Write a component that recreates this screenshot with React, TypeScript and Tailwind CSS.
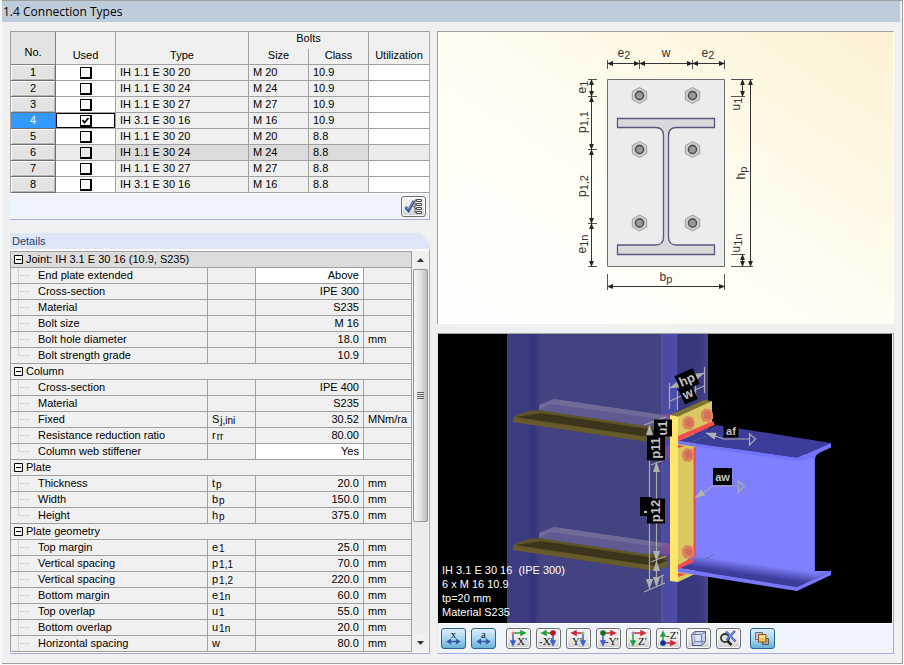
import { useState, type ReactNode } from "react";
import clsx from "clsx";

type Connection = { type: string; size: string; grade: string };

type Param = {
  label: string;
  symbol?: string;
  sub?: string;
  value: string;
  unit?: string;
  editable?: boolean;
};

type Group = { title: string; active?: boolean; params: Param[] };

const CONNECTIONS: Connection[] = [
  { type: "IH 1.1 E 30 20", size: "M 20", grade: "10.9" },
  { type: "IH 1.1 E 30 24", size: "M 24", grade: "10.9" },
  { type: "IH 1.1 E 30 27", size: "M 27", grade: "10.9" },
  { type: "IH 3.1 E 30 16", size: "M 16", grade: "10.9" },
  { type: "IH 1.1 E 30 20", size: "M 20", grade: "8.8" },
  { type: "IH 1.1 E 30 24", size: "M 24", grade: "8.8" },
  { type: "IH 1.1 E 30 27", size: "M 27", grade: "8.8" },
  { type: "IH 3.1 E 30 16", size: "M 16", grade: "8.8" },
];

const GROUPS: Group[] = [
  {
    title: "Joint: IH 3.1 E 30 16 (10.9, S235)",
    active: true,
    params: [
      { label: "End plate extended", value: "Above", editable: true },
      { label: "Cross-section", value: "IPE 300" },
      { label: "Material", value: "S235" },
      { label: "Bolt size", value: "M 16" },
      { label: "Bolt hole diameter", value: "18.0", unit: "mm" },
      { label: "Bolt strength grade", value: "10.9" },
    ],
  },
  {
    title: "Column",
    params: [
      { label: "Cross-section", value: "IPE 400" },
      { label: "Material", value: "S235" },
      { label: "Fixed", symbol: "S", sub: "j,ini", value: "30.52", unit: "MNm/ra" },
      { label: "Resistance reduction ratio", symbol: "r", sub: "rr", value: "80.00" },
      { label: "Column web stiffener", value: "Yes", editable: true },
    ],
  },
  {
    title: "Plate",
    params: [
      { label: "Thickness", symbol: "t", sub: "p", value: "20.0", unit: "mm" },
      { label: "Width", symbol: "b", sub: "p", value: "150.0", unit: "mm" },
      { label: "Height", symbol: "h", sub: "p", value: "375.0", unit: "mm" },
    ],
  },
  {
    title: "Plate geometry",
    params: [
      { label: "Top margin", symbol: "e", sub: "1", value: "25.0", unit: "mm" },
      { label: "Vertical spacing", symbol: "p", sub: "1,1", value: "70.0", unit: "mm" },
      { label: "Vertical spacing", symbol: "p", sub: "1,2", value: "220.0", unit: "mm" },
      { label: "Bottom margin", symbol: "e", sub: "1n", value: "60.0", unit: "mm" },
      { label: "Top overlap", symbol: "u", sub: "1", value: "55.0", unit: "mm" },
      { label: "Bottom overlap", symbol: "u", sub: "1n", value: "20.0", unit: "mm" },
      { label: "Horizontal spacing", symbol: "w", value: "80.0", unit: "mm" },
    ],
  },
];

function ToolButton({
  label,
  active,
  children,
}: {
  label: string;
  active?: boolean;
  children: ReactNode;
}) {
  return (
    <button
      type="button"
      aria-label={label}
      className={clsx(
        "h-[21px] w-[25px] shrink-0 rounded-[3px] border",
        active
          ? "border-[#2c628b] bg-linear-to-b from-[#dbeefa] via-[#a9d7f0] to-[#69b0d9]"
          : "border-[#707070] bg-linear-to-b from-[#f4f4f4] via-[#ebebeb] to-[#cfcfcf] shadow-[inset_0_0_0_1px_#fbfbfb]",
      )}
    >
      <svg viewBox="0 0 23 19" className="block h-full w-full overflow-visible">
        {children}
      </svg>
    </button>
  );
}

function ConnectionTable() {
  const [used, setUsed] = useState<number[]>([3]);
  const [selected, setSelected] = useState(3);

  const toggle = (i: number) => {
    setSelected(i);
    setUsed((prev) => (prev.includes(i) ? prev.filter((n) => n !== i) : [...prev, i]));
  };

  return (
    <section className="border-r border-b border-[#a9a9e8] bg-[#eff3fa]">
      <table className="w-full table-fixed border-separate border-spacing-0 border-t border-l border-[#a0a0a0] bg-[#f0f0f0] text-left">
        <colgroup>
          <col className="w-[45px]" />
          <col className="w-[60px]" />
          <col />
          <col className="w-[60px]" />
          <col className="w-[60px]" />
          <col className="w-[60px]" />
        </colgroup>
        <thead className="text-center leading-[13px]">
          <tr>
            <th rowSpan={2} className="border-r border-b border-[#808080] bg-[#e3e3e3] p-0 pt-2 font-normal">
              No.
            </th>
            <th rowSpan={2} className="border-r border-b border-[#a0a0a0] p-0 pb-[2px] align-bottom font-normal">
              Used
            </th>
            <th rowSpan={2} className="border-r border-b border-[#a0a0a0] p-0 pb-[2px] align-bottom font-normal">
              Type
            </th>
            <th colSpan={2} className="h-[17px] border-r border-[#a0a0a0] p-0 align-top font-normal">
              Bolts
            </th>
            <th rowSpan={2} className="border-b border-[#a0a0a0] p-0 pb-[2px] align-bottom font-normal">
              Utilization
            </th>
          </tr>
          <tr>
            <th className="h-4 border-r border-b border-[#a0a0a0] p-0 pb-[2px] font-normal">Size</th>
            <th className="h-4 border-r border-b border-[#a0a0a0] p-0 pb-[2px] font-normal">Class</th>
          </tr>
        </thead>
        <tbody>
          {CONNECTIONS.map((c, i) => {
            const current = i === selected;
            const hot = i === 5;
            const cell = clsx("h-4 border-r border-b border-[#a0a0a0] p-0 pl-1", hot && "bg-[#dbdbdb]");
            return (
              <tr key={i}>
                <th
                  scope="row"
                  className={clsx(
                    "h-4 border-r border-b border-[#707070] p-0 text-center font-normal",
                    current
                      ? "bg-[#3399ff] text-white"
                      : "bg-[#e3e3e3] shadow-[inset_1px_1px_0_#fff,inset_-1px_-1px_0_#b4b4b4]",
                  )}
                >
                  {i + 1}
                </th>
                <td
                  className={clsx(
                    "h-4 border-r border-b border-[#a0a0a0] p-0",
                    hot ? "bg-[#ebebeb]" : "bg-white",
                    current && "shadow-[inset_0_0_0_1px_#000]",
                  )}
                >
                  <label className="relative mx-auto block h-3 w-3">
                    <input
                      type="checkbox"
                      aria-label={`Used, connection ${i + 1}`}
                      checked={used.includes(i)}
                      onChange={() => toggle(i)}
                      className="peer block h-3 w-3 appearance-none border-t border-r-2 border-b-2 border-l border-black"
                    />
                    <svg
                      viewBox="0 0 12 12"
                      className="pointer-events-none absolute inset-0 hidden h-3 w-3 peer-checked:block"
                    >
                      <path d="M2.500 5 4.500 7.600 8.500 3" fill="none" stroke="#000" strokeWidth="1.700" />
                    </svg>
                  </label>
                </td>
                <td className={cell}>{c.type}</td>
                <td className={cell}>{c.size}</td>
                <td className={cell}>{c.grade}</td>
                <td className={clsx("h-4 border-b border-[#a0a0a0] p-0", hot ? "bg-[#ebebeb]" : "bg-white")} />
              </tr>
            );
          })}
        </tbody>
      </table>
      <div className="flex justify-end border-t border-white px-[3px] pt-[2px] pb-[2px]">
        <ToolButton label="Select connections">
          <path d="M3.500 10 6.500 13.500 12 4" fill="none" stroke="#2d4d94" strokeWidth="2.800" />
          <path d="M4 10.200 6.500 12.500 11.500 4.500" fill="none" stroke="#8fabe2" />
          <path d="M10.500 9.500h2.500M13 3v12.500M13 3h2M13 7.500h2M13 11.500h2M13 15.500h2" fill="none" stroke="#555" />
          <path
            d="M14.500 2.500h5v2h-5zM14.500 6.500h5v2h-5zM14.500 10.500h5v2h-5zM14.500 14.500h5v2h-5z"
            fill="#e8e8e8"
            stroke="#4d4d4d"
          />
        </ToolButton>
      </div>
    </section>
  );
}

function TreeLines({ last }: { last: boolean }) {
  return (
    <svg viewBox="0 0 27 15" className="block h-[15px] w-[27px] shrink-0">
      <path d={last ? "M7.500 0V7.500H19" : "M7.500 0V15M7.500 7.500H19"} fill="none" stroke="#d4d4d4" />
    </svg>
  );
}

function DetailsTable() {
  const [closed, setClosed] = useState<string[]>([]);

  const toggle = (title: string) =>
    setClosed((prev) => (prev.includes(title) ? prev.filter((t) => t !== title) : [...prev, title]));

  const cell = "h-4 border-r border-b border-[#a0a0a0] p-0";

  return (
    <table className="w-full table-fixed border-separate border-spacing-0 border-t border-l border-[#a0a0a0] bg-[#f0f0f0]">
      <colgroup>
        <col />
        <col className="w-12" />
        <col className="w-[108px]" />
        <col className="w-12" />
      </colgroup>
      {GROUPS.map((g) => {
        const open = !closed.includes(g.title);
        return (
          <tbody key={g.title}>
            <tr className={clsx(g.active && "bg-[#dcdcdc]")}>
              <th colSpan={4} className={clsx(cell, "text-left font-normal")}>
                <button type="button" onClick={() => toggle(g.title)} className="flex h-[15px] items-center gap-[3px] pl-[3px]">
                  <svg viewBox="0 0 9 9" className="h-[9px] w-[9px]">
                    <path d="M.5.5h8v8h-8z" fill="#fff" stroke="#000" />
                    <path d={open ? "M2 4.500h5" : "M2 4.500h5M4.500 2v5"} stroke="#000" />
                  </svg>
                  {g.title}
                </button>
              </th>
            </tr>
            {open &&
              g.params.map((p, i) => (
                <tr key={i}>
                  <td className={cell}>
                    <div className="flex">
                      <TreeLines last={i === g.params.length - 1 && p.symbol !== "w"} />
                      {p.label}
                    </div>
                  </td>
                  <td className={clsx(cell, "pl-1")}>
                    {p.symbol}
                    {p.sub && <sub className="-bottom-px ml-px text-[10px]">{p.sub}</sub>}
                  </td>
                  <td className={clsx(cell, "pr-1 text-right", p.editable && "bg-white")}>{p.value}</td>
                  <td className={clsx(cell, "pl-1 whitespace-nowrap")}>{p.unit}</td>
                </tr>
              ))}
          </tbody>
        );
      })}
    </table>
  );
}

function ScrollBar() {
  return (
    <div className="flex w-[17px] shrink-0 flex-col bg-[#f0f0f0] px-px">
      <button type="button" aria-label="Scroll up" className="flex h-[18px] items-center justify-center">
        <svg viewBox="0 0 7 4" className="h-1 w-[7px]">
          <path d="M0 4 3.500 0 7 4z" fill="#333" />
        </svg>
      </button>
      <div className="flex grow flex-col bg-[#ececec]">
        <div className="flex grow-9 basis-0 items-center justify-center rounded-[2px] border border-[#979797] bg-linear-to-r from-[#f5f5f5] via-[#e4e4e6] to-[#bcbcc0]">
          <svg viewBox="0 0 7 8" className="h-2 w-[7px]">
            <path d="M0 .5h7M0 2.500h7M0 4.500h7M0 6.500h7" stroke="#666" />
          </svg>
        </div>
        <div className="grow-4 basis-0" />
      </div>
      <button type="button" aria-label="Scroll down" className="flex h-[18px] items-center justify-center">
        <svg viewBox="0 0 7 4" className="h-1 w-[7px]">
          <path d="M0 0 3.500 4 7 0z" fill="#333" />
        </svg>
      </button>
    </div>
  );
}

function DimLabel({ x, y, main, sub, turned }: { x: number; y: number; main: string; sub?: string; turned?: boolean }) {
  return (
    <text x={x} y={y} textAnchor="middle" fontSize="12" fill="#333" transform={turned ? `rotate(-90 ${x} ${y})` : undefined}>
      {main}
      {sub && (
        <tspan dy="2" fontSize="11">
          {sub}
        </tspan>
      )}
    </text>
  );
}

function PlateDrawing() {
  const dim = { stroke: "#333", strokeWidth: 1, markerStart: "url(#dim)", markerEnd: "url(#dim)" };
  const bolts = [95.5, 149.5, 223].flatMap((y) => [639.5, 692.5].map((x) => [x, y]));

  return (
    <svg viewBox="570 45 192 266" className="h-[266px] w-48" fontFamily="Liberation Sans, sans-serif">
      <defs>
        <marker id="dim" viewBox="0 0 6 6" refX="5.500" refY="3" markerWidth="6" markerHeight="6" orient="auto-start-reverse">
          <path d="M0 .6 6 3 0 5.400z" fill="#222" />
        </marker>
      </defs>
      <path d="M607.500 79.500h117v187h-117z" fill="#ebeded" stroke="#707070" />
      <path
        d="M617.500 118.500h97v9h-38q-8 0-8 8v101.500q0 8 8 8h38v9.500h-97v-9.500h38q8 0 8-8v-101.500q0-8-8-8h-38z"
        fill="#d9d9db"
        stroke="#5c557f"
        strokeWidth="1.300"
      />
      {bolts.map(([x, y]) => (
        <g key={`${x}-${y}`} transform={`translate(${x} ${y})`}>
          <path d="M0-8 7.200-4V4L0 8-7.200 4V-4z" fill="#d0d0d0" stroke="#8d8d8d" strokeWidth=".8" />
          <circle r="5.400" fill="#bcbcbc" />
          <circle r="4" fill="#999" stroke="#454545" strokeWidth="1.300" />
        </g>
      ))}
      <path
        d="M607.500 60v9M639.500 60v9M692.500 60v9M724.500 60v9M588 79.500h9M588 96.500h9M588 149.500h9M588 223.500h9M588 266.500h9M731 79.500h22M731 96.500h14M731 254.500h14M731 266.500h22M607.500 274v16M724.500 274v16"
        stroke="#555"
      />
      <path d="M607.500 63.500H639.500" {...dim} />
      <path d="M639.500 63.500H692.500" {...dim} />
      <path d="M692.500 63.500H724.500" {...dim} />
      <path d="M591.500 79.500V96.500" {...dim} />
      <path d="M591.500 96.500V149.500" {...dim} />
      <path d="M591.500 149.500V223.500" {...dim} />
      <path d="M591.500 223.500V266.500" {...dim} />
      <path d="M742.500 79.500V96.500" {...dim} />
      <path d="M742.500 254.500V266.500" {...dim} />
      <path d="M750.500 79.500V266.500" {...dim} />
      <path d="M607.500 286.500H724.500" {...dim} />
      <DimLabel x={624} y={57} main="e" sub="2" />
      <DimLabel x={666} y={57} main="w" />
      <DimLabel x={708} y={57} main="e" sub="2" />
      <DimLabel x={586} y={87} main="e" sub="1" turned />
      <DimLabel x={586} y={122} main="p" sub="1,1" turned />
      <DimLabel x={586} y={186} main="p" sub="1,2" turned />
      <DimLabel x={586} y={244} main="e" sub="1n" turned />
      <DimLabel x={740} y={104} main="u" sub="1" turned />
      <DimLabel x={745} y={173} main="h" sub="p" turned />
      <DimLabel x={740} y={243} main="u" sub="1n" turned />
      <DimLabel x={666} y={281} main="b" sub="p" />
    </svg>
  );
}

function Stiffener() {
  return (
    <>
      <path d="M513 417 528 411 543 410 668 428V439L655 442.500 513 422z" fill="#5f5428" />
      <path d="M516 417 541 413 668 432 655 438z" fill="#3d351b" />
      <path d="M513 418 655 438 668 433V438L655 443 513 422z" fill="#665b2a" />
      <path d="M539 405 554 399 670 416V425L645 426 539 410z" fill="#5f5a92" />
      <path d="M539 405 554 399 670 416 668 420 550 404 539 410z" fill="#706a98" />
    </>
  );
}

function Tag({ x, y, w, h = 15, angle = 0, text }: { x: number; y: number; w: number; h?: number; angle?: number; text: string }) {
  return (
    <g transform={`translate(${x} ${y}) rotate(${angle})`}>
      <rect x={-w / 2} y={-h / 2} width={w} height={h} fill="#000" />
      <text y="4" textAnchor="middle" fontSize={angle ? 13 : 11} fontWeight="bold" fill="#c4c4c4">
        {text}
      </text>
    </g>
  );
}

function JointView() {
  return (
    <svg viewBox="438 334 454 289" className="block w-full" fontFamily="Liberation Sans, sans-serif">
      <defs>
        <linearGradient id="column" gradientUnits="userSpaceOnUse" x1="507" x2="708" y1="0" y2="0">
          <stop offset="0" stopColor="#3c3c82" />
          <stop offset=".1" stopColor="#3b3b80" />
          <stop offset=".13" stopColor="#33337a" />
          <stop offset=".17" stopColor="#434381" />
          <stop offset=".765" stopColor="#434381" />
          <stop offset=".766" stopColor="#5050a2" />
          <stop offset=".79" stopColor="#4a4aa2" />
          <stop offset=".845" stopColor="#4c4cac" />
          <stop offset=".85" stopColor="#36367a" />
          <stop offset=".97" stopColor="#3b3b82" />
          <stop offset="1" stopColor="#46468c" />
        </linearGradient>
        <linearGradient id="flange" gradientUnits="userSpaceOnUse" x1="750" y1="563" x2="748.300" y2="575">
          <stop offset="0" stopColor="#8080ff" />
          <stop offset="1" stopColor="#3c3c9a" />
        </linearGradient>
        <marker id="arr" viewBox="0 0 9 6" refX="8.500" refY="3" markerWidth="9" markerHeight="6" orient="auto-start-reverse">
          <path d="M0 0 9 3 0 6z" fill="#b0b0b0" />
        </marker>
      </defs>
      <path d="M438 334h454v289h-454z" fill="#000" />
      <path d="M507 334h201v289h-201z" fill="url(#column)" />
      <Stiffener />
      <g transform="translate(0 128)">
        <Stiffener />
      </g>
      <g fill="#8a4a9a" opacity=".6">
        <circle cx="668" cy="418" r="5" />
        <circle cx="668" cy="452" r="6" />
        <circle cx="667" cy="549" r="6" />
      </g>

      {/* end plate */}
      <path d="M670 415 704 400 712 401 678 416.500z" fill="#80752f" />
      <path d="M670 415 678 416.500V582L670 581z" fill="#ffe66b" />
      <path d="M678 416.500 712 401V424L695 433V574L678 582z" fill="#dac961" />

      {/* beam */}
      <path d="M695 445 815 455V575L695 560z" fill="#8080ff" />
      <path d="M678 441 717 425 831 443 797 458z" fill="#3c3c9a" />
      <path d="M678 441 797 458 831 443V447.500L819 453Q815 455 815 460L811 458 797 461.500 678 444z" fill="#7474fa" />
      <path d="M678 568 694 554 815 571 831 571 797 587z" fill="url(#flange)" />
      <path d="M678 568 797 587 831 571V575L797 591 678 572z" fill="#7676ff" />
      <path d="M814.500 458V571L811 577 819 574 831 571" fill="none" stroke="#6e6ef4" />

      {/* welds */}
      <path d="M678 436 713 421 715 425 678 441z" fill="#f04e50" />
      <path d="M693.500 447 696 448V556L693.500 559z" fill="#f04e50" />
      <path d="M678 565 692 558 694 562 678 569z" fill="#f04e50" />
      <path d="M678 445 685 446 678 448zM678 573 686 574 678 577z" fill="#ee4a40" />
      <path d="M694 441 706 436M702 561 714 554" stroke="#327a7c" strokeDasharray="3 2" />

      {[
        [688.5, 423],
        [707, 415.5],
        [688, 455],
        [688, 552],
      ].map(([x, y]) => (
        <g key={`${x}-${y}`} transform={`translate(${x} ${y})`}>
          <path d="M-6-3-2-7 4-6 6-2V3L2 7-4 6-6 2z" fill="#df8660" />
          <path d="M-3-3 1-5 4-2V3L0 4-3 2z" fill="#d17058" />
        </g>
      ))}

      {/* dimensions */}
      <g stroke="#aaa" fill="none" strokeWidth="1.200">
        <path d="M649.500 425V589" markerStart="url(#arr)" markerEnd="url(#arr)" />
        <path d="M656.500 462V561" markerStart="url(#arr)" markerEnd="url(#arr)" />
        <path d="M656.500 561V587" markerStart="url(#arr)" markerEnd="url(#arr)" />
        <path d="M644 425 666 417M651 465 666 459M651 562 666 556M644 592 665 583M659 577 664 575M662 575V584M658 586 665 583" />
        <path d="M669.500 409V383M704.500 393V367M677.500 410V391M695.500 400V382" />
        <path d="M670 388 704 373" markerStart="url(#arr)" markerEnd="url(#arr)" />
        <path d="M670 401 704 386" />
        <path d="M706 433 724 439H750" markerStart="url(#arr)" />
        <path d="M749.500 434 755.500 439 749.500 445z" />
        <path d="M695 498 713 486H739" markerStart="url(#arr)" />
        <path d="M738.500 481 744.500 486 738.500 492z" />
      </g>
      <path d="M640 497h12v19h-12z" fill="#000" />
      <path d="M644 511h3v2h-3z" fill="#c4c4c4" />
      <Tag x={688} y={394} w={14} h={17} angle={-24} text="w" />
      <Tag x={687} y={380} w={20} h={17} angle={-24} text="hp" />
      <Tag x={656} y={448} w={25} h={18} angle={-90} text="p11" />
      <Tag x={663} y={428} w={17} h={18} angle={-90} text="u1" />
      <Tag x={656} y={511} w={25} h={18} angle={-90} text="p12" />
      <Tag x={731} y={431} w={15} h={13} text="af" />
      <Tag x={722.5} y={476.5} w={19} h={17} text="aw" />
    </svg>
  );
}

type AxisProps = {
  text: string;
  textX: number;
  textY?: number;
  x: number;
  y: number;
  across: string;
  acrossTo: number;
  along: string;
  alongTo: number;
  dot: string;
  big?: boolean;
};

function AxisGlyph({ text, textX, textY = 16, x, y, across, acrossTo, along, alongTo, dot, big }: AxisProps) {
  const h = Math.sign(acrossTo - x) * 4;
  const v = Math.sign(alongTo - y) * 4;
  return (
    <>
      <path d={`M${x} ${y}H${acrossTo - h / 2}M${acrossTo - h} ${y - 2}L${acrossTo} ${y}L${acrossTo - h} ${y + 2}z`} fill={across} stroke={across} strokeWidth="1.500" />
      <path d={`M${x} ${y}V${alongTo - v / 2}M${x - 2} ${alongTo - v}L${x} ${alongTo}L${x + 2} ${alongTo - v}z`} fill={along} stroke={along} strokeWidth="1.500" />
      <circle cx={x} cy={y} r={big ? 2.8 : 1.5} fill={dot} />
      <text x={textX} y={textY} fontFamily="Liberation Serif, serif" fontSize="11" fill="#111">
        {text}
      </text>
    </>
  );
}

const RED = "#cf2a3a";
const GREEN = "#27a040";
const BLUE = "#3c60cc";

const AXES: AxisProps[] = [
  { text: "X'", textX: 10, x: 6, y: 4, across: GREEN, acrossTo: 18, along: BLUE, alongTo: 16, dot: "#f08080" },
  { text: "-X'", textX: 2, x: 16, y: 4, across: GREEN, acrossTo: 5, along: BLUE, alongTo: 16, dot: "#c01020", big: true },
  { text: "Y'", textX: 5, x: 16, y: 4, across: RED, acrossTo: 5, along: BLUE, alongTo: 16, dot: "#70d070" },
  { text: "-Y'", textX: 8, x: 6, y: 4, across: RED, acrossTo: 18, along: BLUE, alongTo: 16, dot: "#107020", big: true },
  { text: "Z'", textX: 11, x: 6, y: 4, across: RED, acrossTo: 18, along: GREEN, alongTo: 16, dot: "#8090e8" },
  { text: "-Z'", textX: 9, textY: 10, x: 6, y: 14, across: RED, acrossTo: 18, along: GREEN, alongTo: 3, dot: "#1030a0", big: true },
];

function ViewToolbar() {
  return (
    <div className="flex flex-wrap gap-[5px] px-[3px] py-1">
      {["x", "a"].map((t) => (
        <ToolButton key={t} label={`Show ${t}`} active>
          <text x="11.500" y="9" textAnchor="middle" fontFamily="Liberation Serif, serif" fontSize="11" fill="#111">
            {t}
          </text>
          <path d="M6 12.500H17M8.500 10.500 5.500 12.500 8.500 14.500zM14.500 10.500 17.500 12.500 14.500 14.500z" fill="#3858a8" stroke="#3858a8" strokeWidth="1.300" />
        </ToolButton>
      ))}
      <div className="ml-[5px] flex gap-[5px]">
        {AXES.map((a) => (
          <ToolButton key={a.text} label={`View in ${a.text}`}>
            <AxisGlyph {...a} />
          </ToolButton>
        ))}
        <ToolButton label="Isometric view">
          <path d="M4.500 5.500 8 2.500H18.500V12.500L15 16.500H5.500z" fill="#cbd3ea" stroke="#56608c" />
          <path d="M4.500 5.500H14.500L18.500 2.500M14.500 5.500 15 16.500M8 2.500V12.500H18.500M8 12.500 5.500 16.500" fill="none" stroke="#7480aa" />
          <path d="M7 6H13.500V12H8.500z" fill="#e8edf8" opacity=".7" />
        </ToolButton>
        <ToolButton label="Zoom to fit">
          <circle cx="8" cy="9" r="4" fill="#dfe3ea" stroke="#333" strokeWidth="1.800" />
          <path d="M10.500 12 14.500 16" stroke="#222" strokeWidth="2.500" />
          <path d="M9 2.500 18.500 12.500M18 2 9.500 11" stroke="#3558b8" strokeWidth="2.200" />
          <path d="M9.500 3 18 12M17.500 2.500 10 10.500" stroke="#8cb0f0" strokeWidth=".9" />
        </ToolButton>
      </div>
      <div className="ml-1 flex">
        <ToolButton label="Layers" active>
          <path d="M4.500 3.500h7v7h-7z" fill="#c9cdd3" stroke="#6c7076" />
          <path d="M11.500 9.500h6v6h-6z" fill="#a9a9a9" stroke="#555" />
          <path d="M7.500 5.500h7.500v7.500h-7.500z" fill="#f5c25a" stroke="#8a5a18" />
          <path d="M8.500 6.500h5.500v2.500h-5.500z" fill="#fde2a0" />
        </ToolButton>
      </div>
    </div>
  );
}

export default function App() {
  return (
    <div className="min-h-screen bg-[#f8f8f8] pr-px pl-[2px] font-['Liberation_Sans',Arial,sans-serif] text-[11px] leading-[15px] text-black">
      <div className="flex flex-col border-t border-r border-b border-[#a0a0a0] bg-[#f0f0f0]">
        <h1 className="mr-[2px] bg-[#bfcddb] pl-px font-['Open_Sans','Noto_Sans',sans-serif] text-[12px] leading-[21px]">
          1.4 Connection Types
        </h1>
        <main className="grid grow grid-cols-[420fr_457fr] gap-[7px] px-2 py-[9px]">
          <div className="flex min-w-0 flex-col gap-[13px]">
            <ConnectionTable />
            <section className="flex grow flex-col">
              <h2 className="bg-[#dde6f5] pl-[2px] leading-4 text-[#1f456e] [clip-path:polygon(0_0,calc(100%-10px)_0,100%_10px,100%_100%,0_100%)]">
                Details
              </h2>
              <div className="flex grow border-r border-b border-[#a9a9e8] bg-white pt-[2px] pb-px">
                <div className="min-w-0 grow">
                  <DetailsTable />
                </div>
                <ScrollBar />
              </div>
            </section>
          </div>

          <div className="flex min-w-0 flex-col gap-[9px]">
            <section className="flex grow items-center justify-center border-t border-r border-l border-t-[#a0a0a0] border-r-white border-l-[#a0a0a0] bg-linear-to-tr from-white via-[#fffdf2] to-[#fdf1d2]">
              <PlateDrawing />
            </section>
            <section className="border-t border-r border-b border-l border-t-[#a0a0a0] border-r-[#a9a9e8] border-b-[#a9a9e8] border-l-[#dde6f5] bg-[#eff3fa]">
              <div className="relative mr-px border-b border-white">
                <JointView />
                <div className="absolute bottom-1 left-1 leading-[14px] whitespace-pre text-white">
                  <p>IH 3.1 E 30 16  (IPE 300)</p>
                  <p>6 x M 16 10.9</p>
                  <p>tp=20 mm</p>
                  <p>Material S235</p>
                </div>
              </div>
              <ViewToolbar />
            </section>
          </div>
        </main>
      </div>
    </div>
  );
}
